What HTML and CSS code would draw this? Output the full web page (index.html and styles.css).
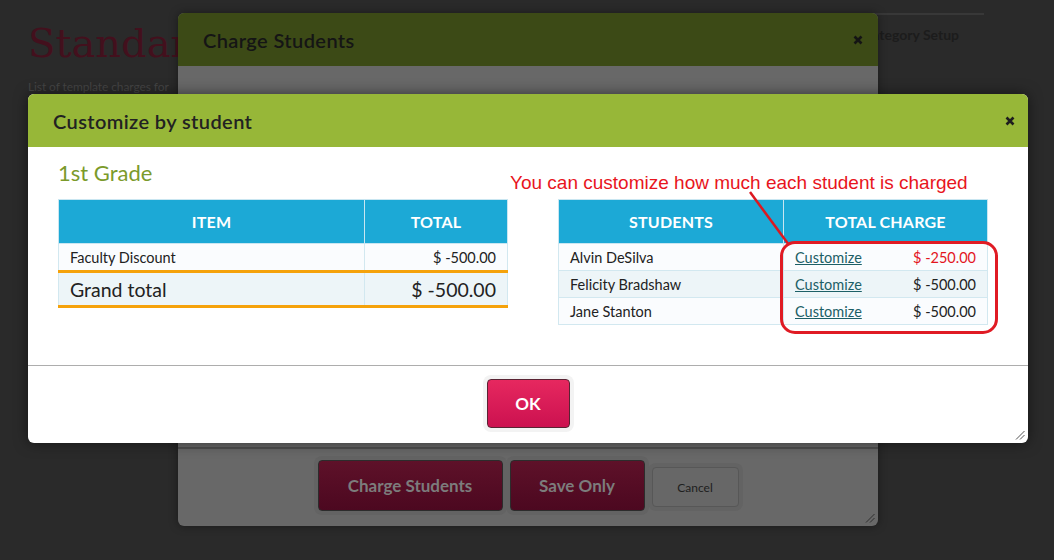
FILE: index.html
```html
<!DOCTYPE html>
<html>
<head>
<meta charset="utf-8">
<title>Customize by student</title>
<link rel="stylesheet" href="styles.css">
</head>
<body>
<div class="page">
  <div class="top">
    <h1 class="title">Standar</h1>
    <nav class="tabs"><span>Category Setup</span></nav>
  </div>
  <p class="lead">List of template charges for</p>
</div>

<div class="modal modal-charge">
  <div class="m-head">
    <h2>Charge Students</h2>
    <svg class="close" viewBox="0 0 10 10" width="10" height="10"><path d="M1.5 1.5L8.5 8.5M8.5 1.5L1.5 8.5"/></svg>
  </div>
  <div class="m-body"></div>
  <div class="m-foot">
    <button class="btn btn-dark btn-wide">Charge Students</button>
    <button class="btn btn-dark btn-save">Save Only</button>
    <button class="btn btn-cancel">Cancel</button>
  </div>
  <svg class="grip" viewBox="0 0 10 10" width="10" height="10"><path d="M9.5 1L1 9.5M9.5 5L5 9.5"/></svg>
</div>

<div class="modal modal-cust">
  <div class="m-head">
    <h2>Customize by student</h2>
    <svg class="close" viewBox="0 0 10 10" width="10" height="10"><path d="M1.5 1.5L8.5 8.5M8.5 1.5L1.5 8.5"/></svg>
  </div>
  <div class="m-body cust-body">
    <h3 class="grade">1st Grade</h3>
    <div class="tables">
      <table class="t-left">
        <colgroup><col class="c-item"><col class="c-total"></colgroup>
        <thead><tr><th>ITEM</th><th>TOTAL</th></tr></thead>
        <tbody>
          <tr><td>Faculty Discount</td><td class="num">$ -500.00</td></tr>
          <tr class="grand"><td>Grand total</td><td class="num">$ -500.00</td></tr>
        </tbody>
      </table>
      <table class="t-right">
        <colgroup><col class="c-stu"><col class="c-charge"></colgroup>
        <thead><tr><th>STUDENTS</th><th>TOTAL CHARGE</th></tr></thead>
        <tbody>
          <tr><td>Alvin DeSilva</td><td><div class="charge"><a href="#">Customize</a><span class="red">$ -250.00</span></div></td></tr>
          <tr><td>Felicity Bradshaw</td><td><div class="charge"><a href="#">Customize</a><span>$ -500.00</span></div></td></tr>
          <tr><td>Jane Stanton</td><td><div class="charge"><a href="#">Customize</a><span>$ -500.00</span></div></td></tr>
        </tbody>
      </table>
    </div>
  </div>
  <div class="m-foot cust-foot">
    <button class="btn btn-ok">OK</button>
  </div>
  <div class="note">You can customize how much each student is charged</div>
  <svg class="pointer" viewBox="0 0 55 60" width="55" height="60"><path d="M7 3L46 56"/></svg>
  <div class="callout"></div>
  <svg class="grip grip-light" viewBox="0 0 10 10" width="10" height="10"><path d="M9.5 1L1 9.5M9.5 5L5 9.5"/></svg>
</div>
</body>
</html>
```

FILE: styles.css
```css
html, body {
  margin: 0;
  padding: 0;
}
body {
  width: 1054px;
  height: 560px;
  overflow: hidden;
  position: relative;
  background: #2a2a2a;
  font-family: Lato, "Liberation Sans", sans-serif;
}

/* background page */
.page {
  padding: 13px 70px 0 28px;
}
.top {
  display: flex;
  justify-content: space-between;
  align-items: flex-start;
}
.title {
  margin: 10px 0 0;
  font: normal 40px/40px "DejaVu Serif", serif;
  color: #43101d;
  white-space: nowrap;
}
.tabs {
  width: 325px;
  border-top: 2px solid #383838;
  padding: 11px 25px 0 0;
  box-sizing: border-box;
  text-align: right;
  font-weight: bold;
  font-size: 14px;
  line-height: 18px;
  color: #1c1c1c;
}
.lead {
  margin: 17px 0 0;
  white-space: nowrap;
  font-size: 12px;
  letter-spacing: -0.1px;
  line-height: 14px;
  color: #454545;
}

/* modals */
.modal {
  position: absolute;
  border-radius: 6px;
  overflow: hidden;
  display: flex;
  flex-direction: column;
}
.m-head {
  height: 53px;
  flex: none;
  display: flex;
  align-items: center;
  padding: 0 13px 0 25px;
}
.m-head h2 {
  margin: 0;
  flex: 1;
  font-size: 20px;
  font-weight: 600;
  letter-spacing: 0.4px;
}
.close path {
  stroke-width: 2.6;
  fill: none;
}
.m-body {
  flex: 1;
}
.grip {
  position: absolute;
  right: 3px;
  bottom: 3px;
}
.grip path {
  stroke: #2e2e2e;
  stroke-width: 1;
  fill: none;
}
.grip-light path {
  stroke: #555;
}

/* dimmed modal behind */
.modal-charge {
  left: 178px;
  top: 13px;
  width: 700px;
  height: 513px;
  background: #686868;
  box-shadow: 0 0 10px rgba(0, 0, 0, 0.4);
}
.modal-charge .m-head {
  background: #3c4a16;
  padding-right: 15px;
}
.modal-charge h2 {
  color: #151515;
}
.modal-charge .close path {
  stroke: #141414;
}
.modal-charge .m-foot {
  height: 79px;
  flex: none;
  box-sizing: border-box;
  border-top: 2px solid #4f4f4f;
  display: flex;
  justify-content: center;
  align-items: flex-start;
  gap: 7px;
  padding-top: 11px;
}
.btn {
  font-family: Lato, "Liberation Sans", sans-serif;
  cursor: pointer;
  padding: 0;
}
.btn-dark {
  height: 51px;
  border: 1px solid #2c2c2c;
  border-radius: 4px;
  background: linear-gradient(#5e1129, #4c0820);
  color: #7c7c7c;
  font-weight: bold;
  font-size: 17px;
  box-shadow: 0 0 0 4px #636363;
}
.btn-wide {
  width: 185px;
}
.btn-save {
  width: 135px;
}
.btn-cancel {
  width: 87px;
  height: 40px;
  margin-top: 7px;
  border: 1px solid #575757;
  border-radius: 4px;
  background: #676767;
  color: #1e1e1e;
  font-size: 12px;
  box-shadow: 0 0 0 4px #636363;
}

/* front modal */
.modal-cust {
  left: 28px;
  top: 94px;
  width: 1000px;
  height: 349px;
  background: #fff;
  box-shadow: 0 0 14px rgba(0, 0, 0, 0.5);
}
.modal-cust .m-head {
  background: #97b738;
}
.modal-cust h2 {
  color: #222;
}
.modal-cust .close path {
  stroke: #1e1e1e;
}
.cust-body {
  padding: 13px 40px 0 30px;
}
.grade {
  margin: 0;
  font-size: 22px;
  line-height: 26px;
  font-weight: normal;
  color: #7b9a2b;
}
.tables {
  display: flex;
  gap: 50px;
  align-items: flex-start;
  margin-top: 13px;
}
table {
  border-collapse: collapse;
  table-layout: fixed;
}
.t-left {
  width: 449px;
}
.t-right {
  width: 429px;
}
.c-item { width: 306px; }
.c-total { width: 143px; }
.c-stu { width: 225px; }
.c-charge { width: 204px; }
th {
  height: 43px;
  padding: 0;
  background: #1ca9d6;
  color: #fff;
  font-size: 16px;
  font-weight: bold;
  letter-spacing: 0.2px;
  text-align: center;
  border: 1px solid #c9e6f1;
}
td {
  height: 26px;
  padding: 0 11px;
  font-size: 14.5px;
  color: #222;
  background: #fafcfe;
  border: 1px solid #d2e8f0;
  white-space: nowrap;
}
.t-right tbody tr:nth-child(even) td {
  background: #edf5f8;
}
.num {
  text-align: right;
}
.grand td {
  height: 32px;
  font-size: 19.5px;
  background: #edf5f8;
  border-top: 3px solid #f5a20b;
  border-bottom: 3px solid #f5a20b;
}
.charge {
  display: flex;
  justify-content: space-between;
  align-items: center;
}
.charge a {
  color: #1c5f66;
  text-decoration: underline;
}
.red {
  color: #e3151d;
}
.cust-foot {
  height: 78px;
  flex: none;
  box-sizing: border-box;
  border-top: 1px solid #adadad;
  display: flex;
  justify-content: center;
  align-items: flex-start;
  padding-top: 13px;
}
.btn-ok {
  width: 83px;
  height: 49px;
  border: 1px solid #5a2333;
  border-radius: 4px;
  background: linear-gradient(#e6285f, #cc1150);
  color: #fff;
  font-weight: bold;
  font-size: 17px;
  box-shadow: 0 0 0 4px #f3f3f3;
}

/* annotation overlay */
.note {
  position: absolute;
  left: 482px;
  top: 78px;
  font: 19px/22px "Liberation Sans", Arial, sans-serif;
  color: #e8151d;
  white-space: nowrap;
}
.pointer {
  position: absolute;
  left: 715px;
  top: 95px;
}
.pointer path {
  stroke: #dc1820;
  stroke-width: 2.5;
  fill: none;
}
.callout {
  position: absolute;
  left: 752px;
  top: 147px;
  width: 218px;
  height: 93px;
  box-sizing: border-box;
  border: 3px solid #e01b24;
  border-radius: 15px;
}
```
